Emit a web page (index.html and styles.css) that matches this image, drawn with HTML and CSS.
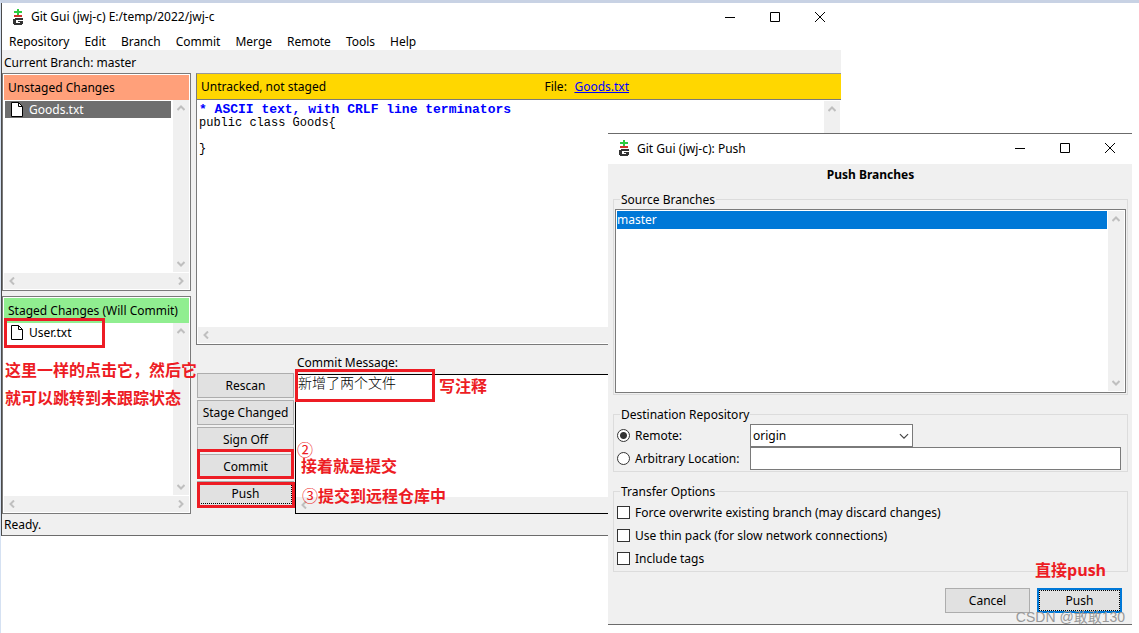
FILE: index.html
```html
<!DOCTYPE html>
<html lang="zh-CN">
<head>
  <meta charset="UTF-8" />
  <meta name="viewport" content="width=device-width, initial-scale=1.0"/>
  <title>Git Gui</title>
  <link rel="stylesheet" href="styles.css">
</head>
<body>

  <!-- shared icons -->
  <svg class="sprite" aria-hidden="true">
    <symbol id="git" viewBox="0 0 10 16">
      <path fill="#2ecc40" d="M4 0h2v2h3v2H6v2H4V4H1V2h3z"/>
      <path fill="#d0342c" d="M1 6h8v2H1z"/>
      <path fill="#333" d="M2 9h8v2H3v3h4v-1H5v-1h5v3H9v1H1v-1H0v-5h2z"/>
    </symbol>
    <symbol id="file" viewBox="0 0 12 15">
      <path fill="#fff" stroke="#000" d="M.5.5h7l4 4v10H.5z"/>
      <path fill="none" stroke="#000" d="M7.500.5v4h4"/>
    </symbol>
    <symbol id="up" viewBox="0 0 8 6"><path d="M.5 5L4 1.500 7.500 5"/></symbol>
    <symbol id="down" viewBox="0 0 8 6"><path d="M.5 1L4 4.500 7.500 1"/></symbol>
    <symbol id="left" viewBox="0 0 6 8"><path d="M5 .5L1.500 4 5 7.500"/></symbol>
    <symbol id="right" viewBox="0 0 6 8"><path d="M1 .5L4.500 4 1 7.500"/></symbol>
    <symbol id="min" viewBox="0 0 10 10"><path d="M0 5.500h10"/></symbol>
    <symbol id="max" viewBox="0 0 10 10"><path d="M.5.5h9v9h-9z"/></symbol>
    <symbol id="close" viewBox="0 0 10 10"><path d="M0 0l10 10M10 0L0 10"/></symbol>
  </svg>

  <main class="window main-window">
    <header class="titlebar">
      <svg class="git-icon"><use href="#git"/></svg>
      <span class="title">Git Gui (jwj-c) E:/temp/2022/jwj-c</span>
      <button class="win-btn" aria-label="Minimize"><svg><use href="#min"/></svg></button>
      <button class="win-btn" aria-label="Maximize"><svg><use href="#max"/></svg></button>
      <button class="win-btn" aria-label="Close"><svg><use href="#close"/></svg></button>
    </header>

    <nav class="menubar">
      <button>Repository</button>
      <button>Edit</button>
      <button>Branch</button>
      <button>Commit</button>
      <button>Merge</button>
      <button>Remote</button>
      <button>Tools</button>
      <button>Help</button>
    </nav>

    <p class="branch">Current Branch: master</p>

    <div class="panes">
      <div class="side">
        <section class="panel">
          <h2 class="panel-title unstaged">Unstaged Changes</h2>
          <div class="scroll-box">
            <ul class="files">
              <li class="selected"><svg><use href="#file"/></svg>Goods.txt</li>
            </ul>
            <div class="vscroll"><svg><use href="#up"/></svg><svg><use href="#down"/></svg></div>
            <div class="hscroll"><svg><use href="#left"/></svg><svg><use href="#right"/></svg></div>
          </div>
        </section>

        <section class="panel">
          <h2 class="panel-title staged">Staged Changes (Will Commit)</h2>
          <div class="scroll-box">
            <ul class="files">
              <li><svg><use href="#file"/></svg>User.txt</li>
            </ul>
            <div class="vscroll"><svg><use href="#up"/></svg><svg><use href="#down"/></svg></div>
            <div class="hscroll"><svg><use href="#left"/></svg><svg><use href="#right"/></svg></div>
          </div>
        </section>
      </div>

      <div class="work">
        <section class="diff">
          <div class="diff-header">
            <span class="diff-state">Untracked, not staged</span>
            <span class="diff-label">File:</span>
            <a href="#">Goods.txt</a>
          </div>
          <div class="scroll-box">
            <pre class="code"><b>* ASCII text, with CRLF line terminators</b>
public class Goods{

}</pre>
            <div class="vscroll"><svg><use href="#up"/></svg></div>
            <div class="hscroll"><svg><use href="#left"/></svg></div>
          </div>
        </section>

        <section class="commit">
          <div class="actions">
            <button class="btn">Rescan</button>
            <button class="btn">Stage Changed</button>
            <button class="btn">Sign Off</button>
            <button class="btn">Commit</button>
            <button class="btn focused">Push</button>
          </div>
          <div class="message">
            <label for="message">Commit Message:</label>
            <div class="message-box">
              <textarea id="message">新增了两个文件</textarea>
              <div class="hscroll"><svg><use href="#left"/></svg></div>
            </div>
          </div>
        </section>
      </div>
    </div>

    <footer class="status">Ready.</footer>
  </main>

  <section class="window push-window">
    <header class="titlebar">
      <svg class="git-icon"><use href="#git"/></svg>
      <span class="title">Git Gui (jwj-c): Push</span>
      <button class="win-btn" aria-label="Minimize"><svg><use href="#min"/></svg></button>
      <button class="win-btn" aria-label="Maximize"><svg><use href="#max"/></svg></button>
      <button class="win-btn" aria-label="Close"><svg><use href="#close"/></svg></button>
    </header>

    <form class="push-form">
      <h1>Push Branches</h1>

      <fieldset>
        <legend>Source Branches</legend>
        <div class="listbox">
          <ul>
            <li>master</li>
          </ul>
          <div class="vscroll"><svg><use href="#up"/></svg><svg><use href="#down"/></svg></div>
        </div>
      </fieldset>

      <fieldset>
        <legend>Destination Repository</legend>
        <div class="dest">
          <label class="choice"><input type="radio" name="dest" checked>Remote:</label>
          <div class="combo">
            <select aria-label="Remote">
              <option>origin</option>
            </select>
            <svg><use href="#down"/></svg>
          </div>
          <label class="choice"><input type="radio" name="dest">Arbitrary Location:</label>
          <input class="location" type="text" aria-label="Location">
        </div>
      </fieldset>

      <fieldset>
        <legend>Transfer Options</legend>
        <label class="choice"><input type="checkbox">Force overwrite existing branch (may discard changes)</label>
        <label class="choice"><input type="checkbox">Use thin pack (for slow network connections)</label>
        <label class="choice"><input type="checkbox">Include tags</label>
      </fieldset>

      <div class="form-buttons">
        <button type="button" class="btn">Cancel</button>
        <button type="button" class="btn default">Push</button>
      </div>
    </form>
  </section>

  <!-- notes drawn over the windows -->
  <div class="box box-user"></div>
  <div class="box box-message"></div>
  <div class="box box-commit"></div>
  <div class="box box-push"></div>
  <p class="note note-unstage">这里一样的点击它，然后它<br>就可以跳转到未跟踪状态</p>
  <p class="note note-message">写注释</p>
  <p class="note note-two"><span class="number">②</span></p>
  <p class="note note-commit">接着就是提交</p>
  <p class="note note-push"><span class="number">③</span>提交到远程仓库中</p>
  <p class="note note-final">直接push</p>
  <p class="watermark">CSDN @敢敢130</p>

</body>
</html>
```

FILE: styles.css
```css
* {
  box-sizing: border-box;
}

body {
  margin: 0;
  position: relative;
  min-height: 100vh;
  border-top: 3px solid #c8d2e4;
  border-left: 1px solid #d5e1f2;
  background-color: #fff;
  color: #000;
  font-family: "Noto Sans", "Noto Sans CJK SC", sans-serif;
  font-size: 12px;
  line-height: 17px;
}

h1, h2, p, ul, pre {
  margin: 0;
  padding: 0;
}

ul {
  list-style: none;
}

button, input, select, textarea {
  font: inherit;
  color: inherit;
  margin: 0;
}

.sprite {
  position: absolute;
  width: 0;
  height: 0;
}

/* windows */
.window {
  background-color: #f0f0f0;
}

.main-window {
  margin-right: 298px;
  border-left: 1px solid #4a4a4a;
  border-bottom: 1px solid #6b6b6b;
}

.push-window {
  position: absolute;
  top: 130px;
  left: 607px;
  right: 7px;
  border-top: 1px solid #6b6b6b;
  border-bottom: 1px solid #6b6b6b;
}

.titlebar {
  display: flex;
  align-items: center;
  gap: 2px;
  height: 27px;
  padding-left: 11px;
  background-color: #fff;
}

.push-window .titlebar {
  height: 30px;
  padding-right: 1px;
  padding-bottom: 2px;
}

.git-icon {
  width: 10px;
  height: 16px;
}

.title {
  flex: 1;
  padding-left: 6px;
}

.win-btn {
  display: flex;
  align-items: center;
  justify-content: center;
  width: 43px;
  height: 26px;
  padding: 0;
  border: none;
  background: none;
}

.win-btn svg {
  width: 10px;
  height: 10px;
  fill: none;
  stroke: #000;
}

.menubar {
  display: flex;
  gap: 15px;
  height: 20px;
  padding: 2px 0 0 7px;
  background-color: #fff;
}

.menubar button {
  padding: 0;
  border: none;
  background: none;
}

.branch {
  padding: 4px 2px 2px;
}

.panes {
  display: grid;
  grid-template-columns: 189px 1fr;
  gap: 5px;
}

.side {
  display: grid;
  grid-template-rows: 1fr 1fr;
  gap: 5px;
}

.panel {
  display: flex;
  flex-direction: column;
  padding: 1px;
  border: 1px solid #7a7a7a;
  background-color: #fff;
}

.panel-title {
  padding: 4px;
  font-size: 12px;
  font-weight: normal;
  white-space: nowrap;
}

.unstaged {
  background-color: #ffa07a;
}

.staged {
  background-color: #90ee90;
}

/* content with scrollbars to the right and below */
.scroll-box {
  flex: 1;
  display: grid;
  grid-template-columns: 1fr 16px;
  grid-template-rows: 1fr 16px;
  gap: 1px;
  background-color: #fff;
}

.vscroll, .hscroll {
  display: flex;
  align-items: center;
  justify-content: space-between;
  background-color: #f0f0f0;
}

.vscroll {
  flex-direction: column;
  padding: 5px 0;
}

.hscroll {
  grid-column: 1 / -1;
  height: 16px;
  padding: 0 5px;
}

.vscroll svg, .hscroll svg {
  fill: none;
  stroke: #bfbfbf;
  stroke-width: 2;
}

.vscroll svg {
  width: 8px;
  height: 6px;
}

.hscroll svg {
  width: 6px;
  height: 8px;
}

.files {
  padding: 1px;
}

.files li {
  display: flex;
  align-items: center;
  gap: 6px;
  padding-left: 6px;
}

.files svg {
  width: 12px;
  height: 15px;
}

.files .selected {
  background-color: #6e6e6e;
  color: #fff;
}

/* diff */
.diff {
  display: flex;
  flex-direction: column;
  border-top: 1px solid #999;
  border-left: 1px solid #7a7a7a;
  border-bottom: 1px solid #7a7a7a;
}

.diff-header {
  display: flex;
  padding: 4px;
  border-bottom: 1px solid #7a7a7a;
  background-color: #ffd700;
}

.diff-state {
  width: 54%;
}

.diff-label {
  width: 30px;
}

.diff a {
  color: #00f;
}

.diff .scroll-box {
  min-height: 244px;
  padding: 1px;
}

.code {
  padding: 2px 0 0 1px;
  font-family: "Liberation Mono", monospace;
  font-size: 12px;
  line-height: 13px;
}

.code b {
  color: #00f;
  font-size: 13px;
}

/* commit area */
.commit {
  display: flex;
  gap: 1px;
  padding-top: 9px;
}

.actions {
  display: flex;
  flex-direction: column;
  gap: 2px;
  width: 98px;
  padding: 19px 0 8px 1px;
}

.btn {
  height: 25px;
  padding: 0;
  border: 1px solid #adadad;
  background-color: #e1e1e1;
  white-space: nowrap;
}

.focused {
  outline: 1px dotted #000;
  outline-offset: -3px;
}

.message {
  flex: 1;
  display: flex;
  flex-direction: column;
}

.message label {
  padding: 0 2px 3px;
}

.message-box {
  flex: 1;
  display: flex;
  flex-direction: column;
  border: 1px solid #000;
  border-right: none;
  background-color: #fff;
}

.message textarea {
  flex: 1;
  padding: 1px 2px;
  border: none;
  outline: none;
  resize: none;
  background: none;
  font-family: "Liberation Mono", "Noto Sans CJK SC", monospace;
  font-size: 14px;
  font-weight: 300;
  line-height: 17px;
}

.status {
  padding: 2px 2px;
}

/* push window */
.push-form {
  padding: 2px 4px 11px 5px;
}

.push-form h1 {
  margin-bottom: 8px;
  font-size: 12px;
  text-align: center;
}

fieldset {
  min-width: 0;
  margin: 0 0 11px;
  padding: 1px;
  border: 1px solid #dcdcdc;
}

legend {
  margin-left: 5px;
  padding: 0 1px;
}

.listbox {
  display: flex;
  min-height: 184px;
  padding: 1px;
  border: 1px solid #7a7a7a;
  background-color: #fff;
}

.listbox ul {
  flex: 1;
}

.listbox li {
  margin-right: 1px;
  padding-bottom: 1px;
  background-color: #0078d7;
  color: #fff;
}

.listbox .vscroll {
  width: 16px;
}

.dest {
  display: grid;
  grid-template-columns: 135px 1fr;
  padding-right: 5px;
}

.choice {
  display: flex;
  align-items: center;
  gap: 5px;
  height: 23px;
  padding-left: 2px;
}

.choice input {
  appearance: none;
  width: 13px;
  height: 13px;
  border: 1px solid #333;
  background-color: #fff;
}

.choice input[type="radio"] {
  border-radius: 50%;
}

.choice input[type="radio"]:checked {
  background-image: radial-gradient(circle, #333 3px, #fff 4px);
}

.combo {
  position: relative;
  width: 163px;
}

.combo select, .location {
  display: block;
  width: 100%;
  height: 23px;
  padding: 0 2px;
  border: 1px solid #7a7a7a;
  border-radius: 0;
  background-color: #fff;
}

.combo select {
  appearance: none;
}

.combo svg {
  position: absolute;
  top: 9px;
  right: 4px;
  width: 10px;
  height: 7px;
  fill: none;
  stroke: #444;
  pointer-events: none;
}

.form-buttons {
  display: flex;
  justify-content: flex-end;
  gap: 7px;
  padding: 5px 6px 0 0;
}

.form-buttons .btn {
  width: 85px;
}

.form-buttons .default {
  border: 2px solid #0078d7;
  outline: 1px dotted #000;
  outline-offset: -3px;
}

/* notes */
.box {
  position: absolute;
  border: 3px solid #ed1c24;
}

.box-user {
  top: 315px;
  left: 3px;
  width: 101px;
  height: 30px;
}

.box-message {
  top: 366px;
  left: 294px;
  width: 140px;
  height: 33px;
}

.box-commit {
  top: 446px;
  left: 196px;
  width: 97px;
  height: 30px;
}

.box-push {
  top: 479px;
  left: 196px;
  width: 98px;
  height: 26px;
}

.note {
  position: absolute;
  color: #ed1c24;
  font-family: "Open Sans", "Noto Sans CJK SC", sans-serif;
  font-size: 16px;
  font-weight: bold;
  line-height: 16px;
  white-space: nowrap;
}

.number {
  font-weight: normal;
}

.note-unstage {
  top: 353px;
  left: 4px;
  line-height: 28px;
}

.note-message {
  top: 375px;
  left: 438px;
}

.note-two {
  top: 439px;
  left: 296px;
}

.note-commit {
  top: 455px;
  left: 300px;
}

.note-push {
  top: 485px;
  left: 301px;
}

.note-final {
  top: 559px;
  left: 1034px;
}

.watermark {
  position: absolute;
  top: 605px;
  right: 14px;
  color: #999;
  font-family: "Liberation Sans", "Noto Sans CJK SC", sans-serif;
  font-size: 14px;
  line-height: 18px;
  white-space: nowrap;
}
```
